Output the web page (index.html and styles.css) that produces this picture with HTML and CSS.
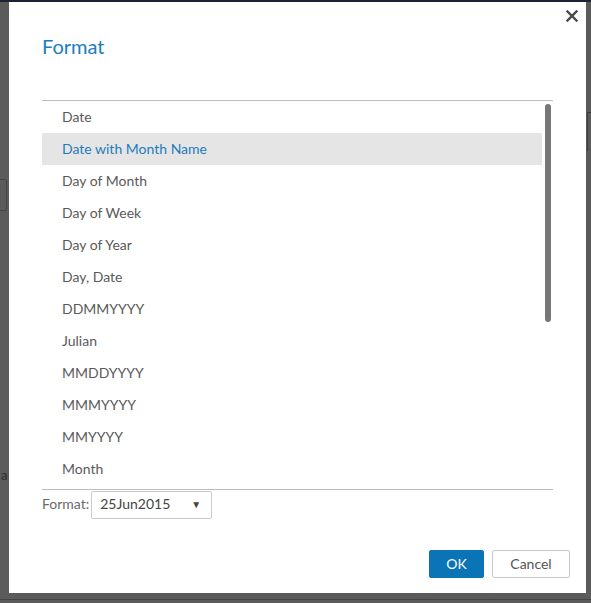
FILE: index.html
```html
<!DOCTYPE html>
<html>
<head>
<meta charset="utf-8">
<link rel="stylesheet" href="styles.css">
</head>
<body>
<div class="page">
  <div class="topbar"></div>
  <div class="bg-box"></div>
  <div class="bg-letter">a</div>
  <div class="bg-right"></div>
  <div class="bg-bottomline"></div>

  <div class="dialog" role="dialog">
    <button class="close" aria-label="Close">
      <svg width="12" height="12" viewBox="0 0 12 12"><path d="M1.5 1.5 L10.5 10.5 M10.5 1.5 L1.5 10.5" stroke="#4a4a4a" stroke-width="2.4" stroke-linecap="square" fill="none"/></svg>
    </button>
    <div class="body">
      <h1 class="title">Format</h1>
      <div class="list">
        <ul class="items">
          <li>Date</li>
          <li class="selected">Date with Month Name</li>
          <li>Day of Month</li>
          <li>Day of Week</li>
          <li>Day of Year</li>
          <li>Day, Date</li>
          <li>DDMMYYYY</li>
          <li>Julian</li>
          <li>MMDDYYYY</li>
          <li>MMMYYYY</li>
          <li>MMYYYY</li>
          <li>Month</li>
        </ul>
        <div class="track"><div class="thumb"></div></div>
      </div>
      <div class="format-row">
        <span class="label">Format:</span>
        <div class="select"><span class="value">25Jun2015</span><span class="arrow">&#9660;</span></div>
      </div>
    </div>
    <div class="footer">
      <button class="btn primary">OK</button>
      <button class="btn">Cancel</button>
    </div>
  </div>
</div>
</body>
</html>
```
FILE: styles.css
```css
html, body {
  margin: 0;
  padding: 0;
}
body {
  width: 591px;
  height: 603px;
  overflow: hidden;
  font-family: Lato, "Open Sans", "Liberation Sans", sans-serif;
}
.page {
  position: relative;
  width: 591px;
  height: 603px;
  background: #5b5b5b;
}
.topbar {
  height: 2px;
  background: #1b2431;
}
.bg-box {
  position: absolute;
  left: -4px;
  top: 179px;
  width: 9px;
  height: 30px;
  border: 1px solid #464646;
  border-radius: 2px;
}
.bg-letter {
  position: absolute;
  left: 1px;
  top: 467px;
  font-size: 13px;
  color: #2e2e2e;
}
.bg-right {
  position: absolute;
  left: 587px;
  top: 112px;
  width: 6px;
  height: 38px;
  border-left: 1px solid #3c3c3c;
  border-top: 1px solid #3c3c3c;
}
.bg-bottomline {
  position: absolute;
  left: 0;
  right: 0;
  top: 599px;
  height: 1px;
  background: #444;
}
.dialog {
  position: absolute;
  left: 9px;
  top: 2px;
  width: 577px;
  height: 591px;
  background: #fff;
  display: flex;
  flex-direction: column;
  box-sizing: border-box;
}
.close {
  position: absolute;
  right: 8px;
  top: 8px;
  width: 12px;
  height: 12px;
  padding: 0;
  border: 0;
  background: none;
  display: flex;
}
.body {
  padding: 30px 33px 0 33px;
}
.title {
  margin: 0 0 40px 0;
  font-size: 20px;
  line-height: 28px;
  font-weight: 400;
  color: #1b7dbf;
}
.list {
  display: flex;
  height: 388px;
  border-top: 1px solid #bdbdbd;
  border-bottom: 1px solid #bdbdbd;
  overflow: hidden;
}
.items {
  list-style: none;
  margin: 0;
  padding: 0;
  width: 500px;
}
.items li {
  height: 32px;
  line-height: 32px;
  padding-left: 20px;
  font-size: 14px;
  color: #5a5a5a;
}
.items li.selected {
  background: #e5e5e5;
  color: #1f7cbc;
}
.track {
  width: 11px;
  padding: 3px 2px 0 3px;
  box-sizing: border-box;
}
.thumb {
  width: 6px;
  height: 218px;
  border-radius: 3px;
  background: #777;
}
.format-row {
  display: flex;
  align-items: center;
  height: 28px;
  margin-top: 1px;
}
.label {
  flex: none;
  font-size: 14px;
  line-height: 16px;
  color: #6a6a6a;
  margin-right: 2px;
  padding-bottom: 3px;
}
.select {
  width: 121px;
  height: 28px;
  box-sizing: border-box;
  border: 1px solid #cbcbcb;
  border-radius: 2px;
  display: flex;
  align-items: center;
  justify-content: space-between;
  padding: 0 10px 2px 8px;
  font-size: 14px;
  line-height: 16px;
  color: #444;
}
.arrow {
  font-size: 10px;
  line-height: 10px;
  color: #444;
}
.footer {
  margin-top: auto;
  display: flex;
  justify-content: flex-end;
  gap: 8px;
  padding: 0 16px 15px 0;
}
.btn {
  height: 28px;
  width: 78px;
  border: 1px solid #c9c9c9;
  border-radius: 2px;
  background: #fff;
  color: #555;
  font-family: Lato, "Open Sans", "Liberation Sans", sans-serif;
  font-size: 14px;
  padding: 0 0 1px 0;
}
.btn.primary {
  width: 55px;
  background: #0a74b6;
  border-color: #0a74b6;
  color: #fff;
}
```
